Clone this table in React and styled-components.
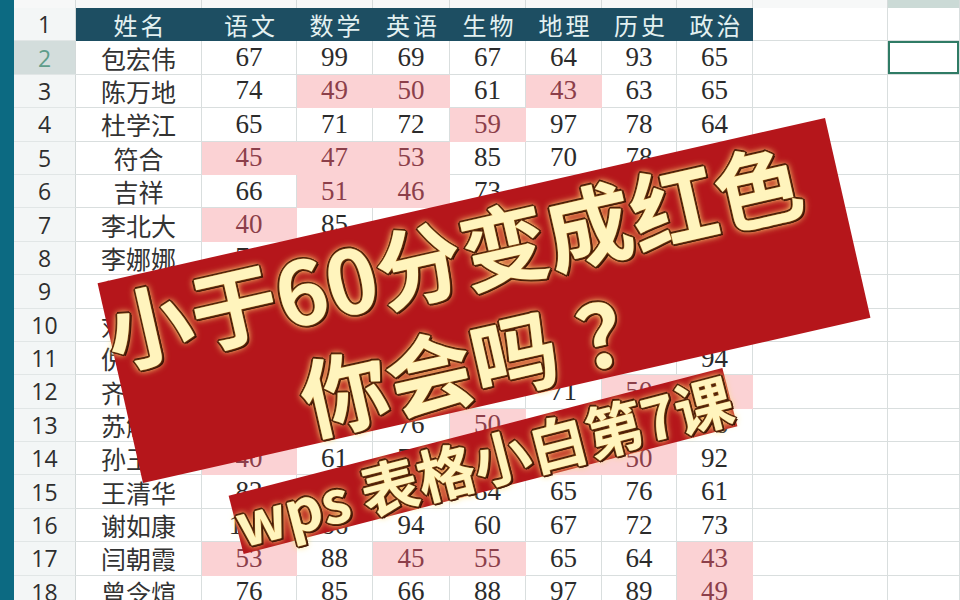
import React from 'react';
import styled, { createGlobalStyle } from 'styled-components';

const GlobalStyle = createGlobalStyle`
  html, body {
    margin: 0;
    padding: 0;
    background: #fff;
  }
  body {
    width: 960px;
    height: 600px;
    overflow: hidden;
  }
`;

const Screen = styled.div`
  position: relative;
  display: flex;
  width: 960px;
  height: 600px;
  overflow: hidden;
  background: #fff;
`;

// window edge on the far left
const Edge = styled.div`
  flex: none;
  width: 14px;
  background: #0c6a82;
`;

const Sheet = styled.div`
  flex: 1;
  display: grid;
  grid-template-columns: 62px 126px 95px 76px 77px 76px 76px 75px 76px 135px 1fr;
  grid-template-rows: 8px repeat(18, 33.4px);
  align-content: start;
`;

const ColHead = styled.div`
  background: ${p => (p.$active ? '#cbdad6' : '#f7f8f8')};
  border-right: 1px solid #d6dbdb;
`;

const RowNum = styled.div`
  display: flex;
  align-items: center;
  justify-content: center;
  background: ${p => (p.$active ? '#d3dddc' : '#f3f6f6')};
  border-right: 1px solid #d3d9d9;
  border-bottom: 1px solid #e1e6e6;
  color: ${p => (p.$active ? '#5f9d8b' : '#2e2e2e')};
  font-family: "Open Sans", "Noto Sans", sans-serif;
  font-size: 23px;
`;

const HeadCell = styled.div`
  display: flex;
  align-items: center;
  justify-content: center;
  background: #1d4e62;
  color: #e3f1f1;
  font-family: "Noto Sans CJK SC", sans-serif;
  font-size: 24px;
  letter-spacing: 3px;
  padding-left: 3px;
`;

const Cell = styled.div`
  display: flex;
  align-items: center;
  justify-content: center;
  background: ${p => (p.$low ? '#fbd2d4' : '#fff')};
  border-right: 1px solid ${p => (p.$low ? '#fbd2d4' : '#d9dede')};
  border-bottom: 1px solid ${p => (p.$low ? '#fbd2d4' : '#d9dede')};
  color: ${p => (p.$low ? '#8c3f4a' : '#2b2b2b')};
  font-family: "Liberation Serif", serif;
  font-size: 27px;
  box-shadow: ${p => (p.$selected ? 'inset 0 0 0 2px #2f7b65' : 'none')};
`;

const NameCell = styled(Cell)`
  font-family: "Noto Sans CJK SC", sans-serif;
  font-size: 25px;
  color: #333;
`;

const Banner = styled.div`
  position: absolute;
  left: 111px;
  top: 198px;
  width: 746px;
  height: 205px;
  transform: rotate(-12.8deg);
  background: #b5161b;
  display: flex;
  flex-direction: column;
  align-items: center;
  justify-content: center;
`;

const glow = `
  0 0 2px #f0a83a,
  2px 2px 0 #3a1105,
  -1px 1px 0 #3a1105,
  1px -1px 0 #3a1105,
  -1px -1px 0 #3a1105,
  2px 0 0 #3a1105,
  -2px 0 0 #3a1105,
  0 2px 0 #3a1105,
  0 -2px 0 #3a1105,
  0 0 6px #ffe48e,
  0 0 9px #ffd86a
`;

const Headline = styled.div`
  margin-right: ${p => p.$shift}px;
  font-family: "Noto Sans CJK SC", sans-serif;
  font-weight: 700;
  font-size: 87px;
  line-height: 108px;
  color: #fff4bd;
  white-space: nowrap;
  text-shadow: ${glow};
`;

const Mark = styled.span`
  margin-left: 22px;
`;

const Tag = styled.div`
  position: absolute;
  left: 228px;
  top: 431px;
  width: 510px;
  height: 60px;
  transform: rotate(-14.5deg);
  background: #b5161b;
  font-family: "Noto Sans CJK SC", sans-serif;
  font-weight: 700;
  font-size: 58px;
  line-height: 58px;
  text-align: center;
  color: #fff4bd;
  white-space: nowrap;
  text-shadow: ${glow};
`;

const subjects = ['姓名', '语文', '数学', '英语', '生物', '地理', '历史', '政治'];

const students = [
  ['包宏伟', 67, 99, 69, 67, 64, 93, 65],
  ['陈万地', 74, 49, 50, 61, 43, 63, 65],
  ['杜学江', 65, 71, 72, 59, 97, 78, 64],
  ['符合', 45, 47, 53, 85, 70, 78, 64],
  ['吉祥', 66, 51, 46, 73, 83, 79, 88],
  ['李北大', 40, 85, 68, 76, 72, 81, 69],
  ['李娜娜', 78, 92, 80, 69, 58, 74, 86],
  ['刘康锋', 88, 66, 57, 82, 75, 68, 71],
  ['刘鹏举', 56, 79, 83, 65, 90, 85, 77],
  ['倪冬声', 81, 74, 62, 88, 69, 77, 94],
  ['齐甜甜', 72, 68, 55, 80, 71, 50, 52],
  ['苏解放', 65, 88, 76, 50, 79, 83, 86],
  ['孙玉敏', 40, 61, 70, 66, 58, 50, 92],
  ['王清华', 82, 75, 68, 84, 65, 76, 61],
  ['谢如康', 100, 86, 94, 60, 67, 72, 73],
  ['闫朝霞', 53, 88, 45, 55, 65, 64, 43],
  ['曾令煊', 76, 85, 66, 88, 97, 89, 49],
];

export default function App() {
  return (
    <>
      <GlobalStyle />
      <Screen>
        <Edge />
        <Sheet>
          <ColHead />
          {Array.from({ length: 10 }).map((_, i) => (
            <ColHead key={i} $active={i === 9} />
          ))}

          <RowNum>1</RowNum>
          {subjects.map(s => (
            <HeadCell key={s}>{s}</HeadCell>
          ))}
          <Cell />
          <Cell />

          {students.map((row, r) => (
            <React.Fragment key={row[0]}>
              <RowNum $active={r === 0}>{r + 2}</RowNum>
              <NameCell>{row[0]}</NameCell>
              {row.slice(1).map((score, c) => (
                <Cell key={c} $low={score < 60}>{score}</Cell>
              ))}
              <Cell />
              <Cell $selected={r === 0} />
            </React.Fragment>
          ))}
        </Sheet>

        <Banner>
          <Headline $shift={40}>小于60分变成红色</Headline>
          <Headline $shift={30}>你会吗<Mark>？</Mark></Headline>
        </Banner>
        <Tag>wps 表格小白第7课</Tag>
      </Screen>
    </>
  );
}
